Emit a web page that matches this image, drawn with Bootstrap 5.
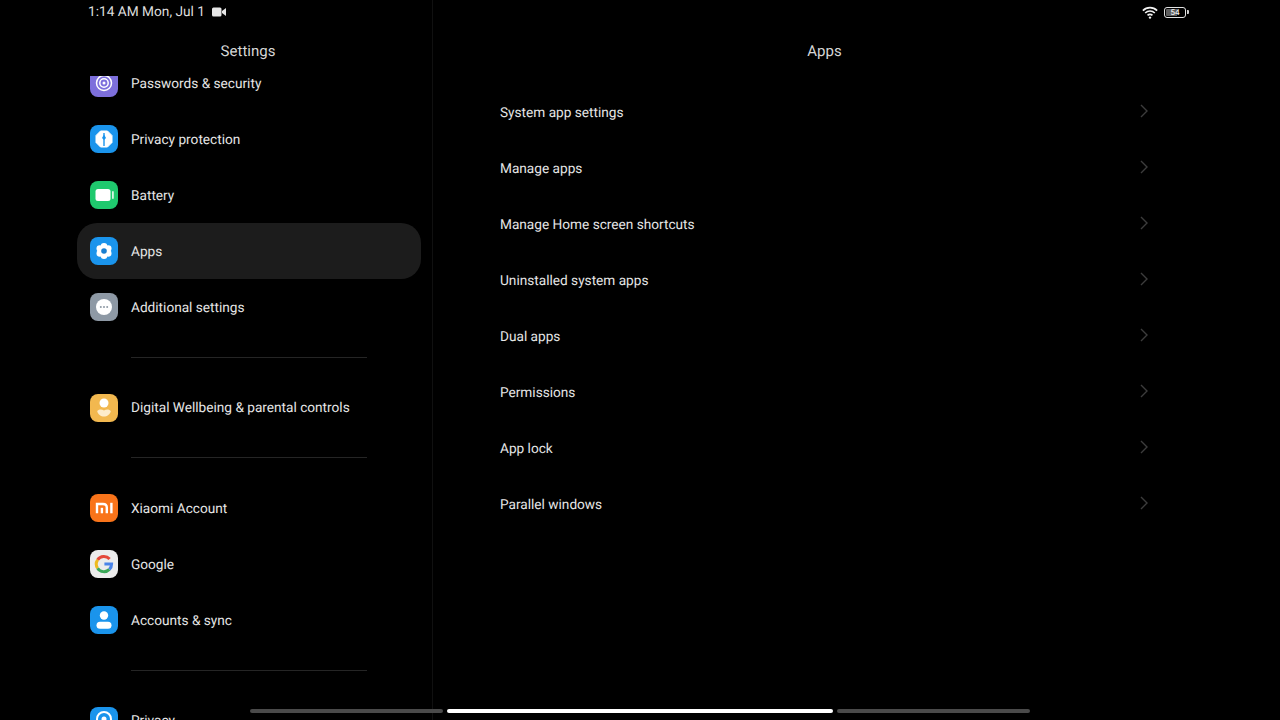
<!DOCTYPE html>
<html lang="en">
  <head>
    <meta charset="UTF-8" />
    <meta name="viewport" content="width=device-width, initial-scale=1.0" />
    <title>Settings - Apps</title>
    <!-- Bootstrap CSS -->
    <link
      rel="stylesheet"
      href="https://cdn.jsdelivr.net/npm/bootstrap@5.3.0/dist/css/bootstrap.min.css"
    />
    <style>
      body {
        background: #000;
        color: #e6e6e6;
        font-family: Roboto, "Liberation Sans", sans-serif;
        font-size: 13.65px;
        text-rendering: geometricPrecision;
        overflow: hidden;
      }
      .screen {
        width: 1280px;
        height: 720px;
        padding: 0 64px;
        overflow: hidden;
        background: #000;
      }
      .left-pane {
        width: 369px;
        height: 720px;
        border-right: 1px solid #101010;
      }
      .right-pane {
        width: 783px;
        height: 720px;
      }
      .status-row {
        height: 24px;
        font-size: 13.7px;
        color: #dedede;
      }
      .left-status {
        padding-left: 24px;
        gap: 7px;
      }
      .right-status {
        padding-right: 27px;
        gap: 6px;
      }
      .pane-title {
        height: 52px;
        padding-top: 2px;
        font-size: 15px;
        color: #d6d6d6;
      }
      .scroll-area {
        height: 644px;
        overflow: hidden;
      }
      .settings-list {
        margin-top: -20.8px;
        padding: 0 11px 0 13px;
      }
      .set-row {
        height: 56px;
        padding: 0 13px;
        background: transparent;
        border: 0;
        color: #e6e6e6;
        border-radius: 20px;
        gap: 13px;
      }
      .set-row span,
      .apps-row span {
        padding-top: 2px;
      }
      .set-row.selected {
        background: #1c1c1c;
      }
      .set-icon {
        width: 28px;
        height: 28px;
        flex: none;
        display: block;
      }
      .group-gap {
        height: 44.5px;
        padding-left: 54px;
        padding-right: 54px;
      }
      .group-gap hr {
        margin: 0;
        border-color: #252525;
        opacity: 1;
      }
      .apps-list {
        margin-top: 8px;
      }
      .apps-row {
        height: 56px;
        padding: 0 68px 0 67px;
        background: transparent;
        border: 0;
        color: #e6e6e6;
      }
      .chev {
        width: 8px;
        height: 14px;
        margin-top: -2px;
      }
      .batt-box {
        width: 22px;
        height: 11px;
        border: 1px solid #e2e2e2;
        border-radius: 3px;
        padding: 1px;
      }
      .batt-fill {
        width: 11px;
        background: #5e5e5e;
        border-radius: 1px 0 0 1px;
      }
      .batt-num {
        left: 0;
        right: 0;
        top: -1px;
        font-size: 8px;
        line-height: 11px;
        font-weight: 500;
        color: #f0f0f0;
      }
      .batt-nub {
        width: 2px;
        height: 4px;
        margin-left: 1px;
        background: #cfcfcf;
        border-radius: 0 1px 1px 0;
      }
      .home-bar {
        left: 250px;
        bottom: 7px;
        gap: 4px;
      }
      .home-seg {
        width: 193px;
        height: 4px;
        border-radius: 2px;
        background: #4a4a4a;
      }
      .home-seg.current {
        width: 386px;
        background: #fff;
      }
    </style>
  </head>
  <body>
    <div class="screen d-flex position-relative">
      <div class="left-pane d-flex flex-column flex-shrink-0">
        <div class="status-row left-status d-flex align-items-center">
          <span>1:14 AM Mon, Jul 1</span>
          <svg width="14" height="10" viewBox="0 0 14 10">
            <rect x="0" y="0.5" width="9.5" height="9" rx="1.5" fill="#e6e6e6" />
            <path d="M10 4 L14 1 V9 L10 6 Z" fill="#e6e6e6" />
          </svg>
        </div>
        <div class="pane-title d-flex align-items-center justify-content-center">Settings</div>
        <div class="scroll-area">
          <div class="settings-list">
            <div class="set-row d-flex align-items-center">
              <svg class="set-icon" viewBox="0 0 28 28">
                <rect width="28" height="28" rx="8" fill="#7d6fdc" />
                <circle cx="14" cy="14" r="7.5" fill="none" stroke="#fff" stroke-width="1.5" />
                <circle cx="14" cy="14" r="4.2" fill="none" stroke="#fff" stroke-width="1.5" />
                <circle cx="14" cy="14" r="1.5" fill="#fff" />
              </svg>
              <span>Passwords &amp; security</span>
            </div>
            <div class="set-row d-flex align-items-center">
              <svg class="set-icon" viewBox="0 0 28 28">
                <rect width="28" height="28" rx="8" fill="#1a94ec" />
                <path d="M10.5 6 H17.5 L22 10.5 V17.5 L17.5 22 H10.5 L6 17.5 V10.5 Z" fill="#fff" stroke="#fff" stroke-linejoin="round" />
                <path d="M14 8 V21" stroke="#1a94ec" stroke-width="1.4" />
                <path d="M14 9.5 L16 13 L14 15 L12 13 Z" fill="#1a94ec" />
              </svg>
              <span>Privacy protection</span>
            </div>
            <div class="set-row d-flex align-items-center">
              <svg class="set-icon" viewBox="0 0 28 28">
                <rect width="28" height="28" rx="8" fill="#1fc96e" />
                <rect x="5.5" y="8" width="15" height="12" rx="2.5" fill="#fff" />
                <rect x="22" y="10" width="1.8" height="8" rx="0.9" fill="#d5f5e2" />
              </svg>
              <span>Battery</span>
            </div>
            <div class="set-row selected d-flex align-items-center">
              <svg class="set-icon" viewBox="0 0 28 28">
                <rect width="28" height="28" rx="8" fill="#1a94ec" />
                <g fill="#fff">
                  <circle cx="14" cy="9.2" r="3.3" />
                  <circle cx="18.2" cy="11.6" r="3.3" />
                  <circle cx="18.2" cy="16.4" r="3.3" />
                  <circle cx="14" cy="18.8" r="3.3" />
                  <circle cx="9.8" cy="16.4" r="3.3" />
                  <circle cx="9.8" cy="11.6" r="3.3" />
                  <circle cx="14" cy="14" r="5" />
                </g>
                <circle cx="14" cy="14" r="2.8" fill="#1a7fd0" />
              </svg>
              <span>Apps</span>
            </div>
            <div class="set-row d-flex align-items-center">
              <svg class="set-icon" viewBox="0 0 28 28">
                <rect width="28" height="28" rx="8" fill="#8e99a5" />
                <circle cx="14" cy="14" r="8" fill="#fff" />
                <circle cx="10.8" cy="14" r="1" fill="#8e99a5" />
                <circle cx="14" cy="14" r="1" fill="#8e99a5" />
                <circle cx="17.2" cy="14" r="1" fill="#8e99a5" />
              </svg>
              <span>Additional settings</span>
            </div>
            <div class="group-gap d-flex flex-column justify-content-center"><hr /></div>
            <div class="set-row d-flex align-items-center">
              <svg class="set-icon" viewBox="0 0 28 28">
                <rect width="28" height="28" rx="8" fill="#f2b84f" />
                <circle cx="14" cy="9" r="4.5" fill="#fff" />
                <path d="M7.2 17 C10 14.5 12 15.5 14 16.5 C16 15.5 18 14.5 20.8 17 C20.3 20.5 17 22.5 14 22.5 C11 22.5 7.7 20.5 7.2 17 Z" fill="#fdeccb" />
              </svg>
              <span>Digital Wellbeing &amp; parental controls</span>
            </div>
            <div class="group-gap d-flex flex-column justify-content-center"><hr /></div>
            <div class="set-row d-flex align-items-center">
              <svg class="set-icon" viewBox="0 0 28 28">
                <rect width="28" height="28" rx="8" fill="#f9741a" />
                <g fill="none" stroke="#fff" stroke-width="2.4">
                  <path d="M7 19.3 V10 H13 C15.6 10 16.8 11.4 16.8 13.6 V19.3" />
                  <path d="M11.9 19.3 V13.8" />
                  <path d="M21.4 8.8 V19.3" />
                </g>
              </svg>
              <span>Xiaomi Account</span>
            </div>
            <div class="set-row d-flex align-items-center">
              <svg class="set-icon" viewBox="0 0 28 28">
                <rect width="28" height="28" rx="8" fill="#ececec" />
                <g fill="none" stroke-width="3">
                  <path d="M19.6 9 A7.6 7.6 0 0 0 7.6 9.8" stroke="#e4483a" />
                  <path d="M7.6 9.8 A7.6 7.6 0 0 0 7.6 18.2" stroke="#eebb1e" />
                  <path d="M7.6 18.2 A7.6 7.6 0 0 0 19.4 19.4" stroke="#3aa757" />
                  <path d="M19.4 19.4 A7.6 7.6 0 0 0 21.6 14 H14.4" stroke="#4a84e8" />
                </g>
              </svg>
              <span>Google</span>
            </div>
            <div class="set-row d-flex align-items-center">
              <svg class="set-icon" viewBox="0 0 28 28">
                <rect width="28" height="28" rx="8" fill="#1a94ec" />
                <circle cx="14" cy="9.5" r="4.2" fill="#fff" />
                <rect x="6.5" y="15.8" width="15" height="7" rx="3.5" fill="#fff" />
              </svg>
              <span>Accounts &amp; sync</span>
            </div>
            <div class="group-gap d-flex flex-column justify-content-center"><hr /></div>
            <div class="set-row d-flex align-items-center">
              <svg class="set-icon" viewBox="0 0 28 28">
                <rect width="28" height="28" rx="8" fill="#1a94ec" />
                <circle cx="14" cy="12" r="7" fill="none" stroke="#fff" stroke-width="2" />
                <circle cx="14" cy="12" r="2.5" fill="#fff" />
              </svg>
              <span>Privacy</span>
            </div>
          </div>
        </div>
      </div>

      <div class="right-pane d-flex flex-column">
        <div class="status-row right-status d-flex align-items-center justify-content-end">
          <svg width="16" height="13" viewBox="0 0 15 12">
            <g fill="none" stroke="#f2f2f2" stroke-width="1.5">
              <path d="M0.8 4.2 A9.6 9.6 0 0 1 14.2 4.2" />
              <path d="M3 6.5 A6.4 6.4 0 0 1 12 6.5" />
              <path d="M5.2 8.7 A3.2 3.2 0 0 1 9.8 8.7" />
            </g>
            <circle cx="7.5" cy="10.8" r="1.1" fill="#f2f2f2" />
          </svg>
          <div class="d-flex align-items-center">
            <div class="batt-box d-flex position-relative">
              <div class="batt-fill"></div>
              <span class="batt-num position-absolute text-center">54</span>
            </div>
            <div class="batt-nub"></div>
          </div>
        </div>
        <div class="pane-title d-flex align-items-center justify-content-center">Apps</div>
        <div class="apps-list list-group list-group-flush">
          <div class="list-group-item apps-row d-flex align-items-center justify-content-between">
            <span>System app settings</span>
            <svg class="chev" viewBox="0 0 8 14"><path d="M1 1 L7 7 L1 13" fill="none" stroke="#3c3c3c" stroke-width="1.4" /></svg>
          </div>
          <div class="list-group-item apps-row d-flex align-items-center justify-content-between">
            <span>Manage apps</span>
            <svg class="chev" viewBox="0 0 8 14"><path d="M1 1 L7 7 L1 13" fill="none" stroke="#3c3c3c" stroke-width="1.4" /></svg>
          </div>
          <div class="list-group-item apps-row d-flex align-items-center justify-content-between">
            <span>Manage Home screen shortcuts</span>
            <svg class="chev" viewBox="0 0 8 14"><path d="M1 1 L7 7 L1 13" fill="none" stroke="#3c3c3c" stroke-width="1.4" /></svg>
          </div>
          <div class="list-group-item apps-row d-flex align-items-center justify-content-between">
            <span>Uninstalled system apps</span>
            <svg class="chev" viewBox="0 0 8 14"><path d="M1 1 L7 7 L1 13" fill="none" stroke="#3c3c3c" stroke-width="1.4" /></svg>
          </div>
          <div class="list-group-item apps-row d-flex align-items-center justify-content-between">
            <span>Dual apps</span>
            <svg class="chev" viewBox="0 0 8 14"><path d="M1 1 L7 7 L1 13" fill="none" stroke="#3c3c3c" stroke-width="1.4" /></svg>
          </div>
          <div class="list-group-item apps-row d-flex align-items-center justify-content-between">
            <span>Permissions</span>
            <svg class="chev" viewBox="0 0 8 14"><path d="M1 1 L7 7 L1 13" fill="none" stroke="#3c3c3c" stroke-width="1.4" /></svg>
          </div>
          <div class="list-group-item apps-row d-flex align-items-center justify-content-between">
            <span>App lock</span>
            <svg class="chev" viewBox="0 0 8 14"><path d="M1 1 L7 7 L1 13" fill="none" stroke="#3c3c3c" stroke-width="1.4" /></svg>
          </div>
          <div class="list-group-item apps-row d-flex align-items-center justify-content-between">
            <span>Parallel windows</span>
            <svg class="chev" viewBox="0 0 8 14"><path d="M1 1 L7 7 L1 13" fill="none" stroke="#3c3c3c" stroke-width="1.4" /></svg>
          </div>
        </div>
      </div>

      <div class="home-bar position-absolute d-flex">
        <div class="home-seg"></div>
        <div class="home-seg current"></div>
        <div class="home-seg"></div>
      </div>
    </div>
    <!-- Bootstrap JS -->
    <script src="https://cdn.jsdelivr.net/npm/bootstrap@5.3.0/dist/js/bootstrap.bundle.min.js"></script>
  </body>
</html>
